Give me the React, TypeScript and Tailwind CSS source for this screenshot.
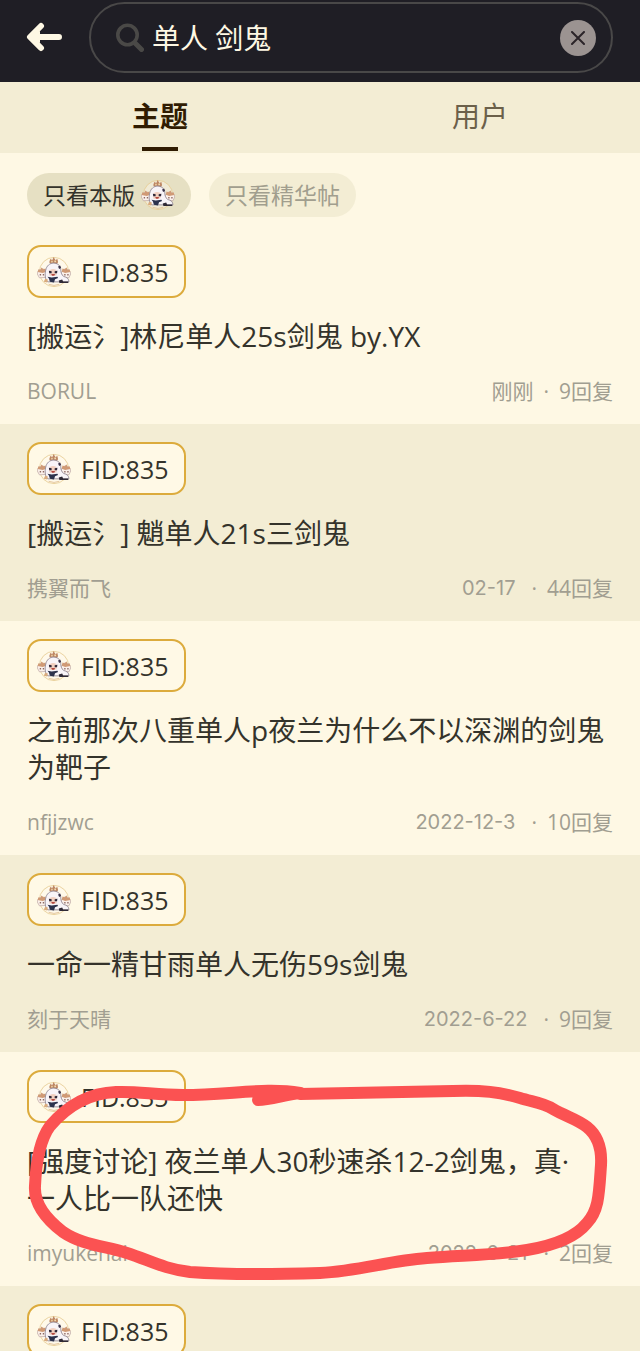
import { useState } from "react";
import clsx from "clsx";

interface Topic {
  id: number;
  title: string;
  author: string;
  date: string;
  replies: number;
  marked?: boolean;
}

const topics: Topic[] = [
  { id: 1, title: "[搬运氵]林尼单人25s剑鬼 by.YX", author: "BORUL", date: "刚刚", replies: 9 },
  { id: 2, title: "[搬运氵] 魈单人21s三剑鬼", author: "携翼而飞", date: "02-17", replies: 44 },
  {
    id: 3,
    title: "之前那次八重单人p夜兰为什么不以深渊的剑鬼为靶子",
    author: "nfjjzwc",
    date: "2022-12-3",
    replies: 10,
  },
  { id: 4, title: "一命一精甘雨单人无伤59s剑鬼", author: "刻于天晴", date: "2022-6-22", replies: 9 },
  {
    id: 5,
    title: "[强度讨论] 夜兰单人30秒速杀12-2剑鬼，真·\n一人比一队还快",
    author: "imyukenai",
    date: "2022-6-21",
    replies: 2,
    marked: true,
  },
  { id: 6, title: "", author: "", date: "", replies: 0 },
];

function BoardEmblem() {
  return (
    <svg viewBox="0 0 100 92" className="h-8 w-[34px] shrink-0" aria-hidden="true">
      <circle cx="50" cy="46" r="43" fill="#fffaf0" fillOpacity="0.4" stroke="#e6cc94" strokeWidth="2.5" />
      {/* crown */}
      <path d="M36 17l3-9 6 3 4-9 5 9 6-3 2 9-5 7H41z" fill="#bd8663" />
      <path d="M42 13h4v5h-4zM51 12h5v5h-5z" fill="#f4dcae" />
      {/* side faces */}
      <path d="M1 52c0-10 8-16 20-14l8 10-4 14-18 1z" fill="#fbf0ea" stroke="#b9a3a0" strokeWidth="2" />
      <path d="M2 46l2-8 6 2 3-7 6 5 6-2 2 9-10 4z" fill="#d09a75" />
      <path d="M99 52c0-10-8-16-20-14l-8 10 4 14 19 1z" fill="#fbf0ea" stroke="#b9a3a0" strokeWidth="2" />
      <path d="M98 46l-2-8-6 2-3-7-6 5-6-2-2 9 10 4z" fill="#d09a75" />
      <path d="M8 52h4v4H8zM17 52h4v4h-4zM80 52h4v4h-4zM89 52h4v4h-4z" fill="#8d6a65" />
      {/* body */}
      <path d="M27 70c-5-12-3-26 0-34 4-12 15-17 24-16 12 1 19 9 19 20 0 9 3 14 8 19 10 2 16 7 16 16H32z" fill="#f8f4f8" stroke="#8f8592" strokeWidth="2.500" />
      <path d="M35 45c3-6 7-8 12-8 6 0 10 2 12 8l-2 11-20 1z" fill="#f1cfc0" />
      <path d="M35 42l8 2v6h-7zM60 42l-8 2v6h7z" fill="#2e2738" />
      <path d="M42 52h11l-2 5h-7z" fill="#b3473e" />
      <path d="M31 60l12 2 17-2 2 4-9 3-3 10-12-2-3-10z" fill="#2c324c" />
      <path d="M62 30l6-3 3 7-6 3z" fill="#3b344b" />
      <path d="M64 71l10-3 3 6h15v4H66z" fill="#302a36" />
      <path d="M24 66l8 2-2 9-10-2z" fill="#d9ab7d" />
      <path d="M34 82q16 7 32 0" fill="none" stroke="#e0bf95" strokeWidth="2.500" />
    </svg>
  );
}

function MarkerLoop() {
  return (
    <svg
      viewBox="0 0 640 234"
      className="pointer-events-none absolute inset-x-0 top-0 z-10 w-full"
      fill="none"
      stroke="#fb5252"
      strokeWidth="12"
      strokeLinecap="round"
      strokeLinejoin="round"
      aria-hidden="true"
    >
      <path d="M258 48C271 48 283 43 300 41C266 35 230 43 183 43C155 43 138 39 116 40C91 41 68 53 50 74C39 89 36 111 35 134C34 149 42 164 63 180C82 193 105 194 127 201C149 208 164 217 190 220C230 223 286 222 320 221C359 219 388 209 427 206C467 203 495 203 527 198C551 194 575 186 587 171C599 158 599 142 601 113C602 96 597 83 587 75C577 67 567 65 553 57C544 51 533 50 520 46C500 40 482 38 453 39C414 40 362 41 300 42" />
    </svg>
  );
}

function TopicRow({ topic }: { topic: Topic }) {
  return (
    <li className="relative shrink-0 px-[27px] pt-[18px] pb-[17px] even:bg-[#f3edd4]">
      <a
        href="#board"
        className="inline-flex h-[53px] items-center gap-[10px] rounded-[14px] border-2 border-[#dcab3c] bg-[#fff9e6] pr-4 pl-2 align-top text-[25px] leading-8 text-[#34332b]"
      >
        <BoardEmblem />
        FID:835
      </a>
      {topic.title && (
        <>
          <h2 className="mt-5 text-[28px] leading-[37px] whitespace-pre-line text-[#34332b]">
            <a href="#topic">{topic.title}</a>
          </h2>
          <div className="mt-5 flex items-center justify-between text-[21px] leading-8 text-[#a19e91]">
            <span>{topic.author}</span>
            <div className="flex gap-[10px]">
              <time
                className={clsx(topic.date.includes("-") && "pr-1.5 font-['Inter',sans-serif] text-[20px]")}
              >
                {topic.date}
              </time>
              <span>·</span>
              <span>{topic.replies}回复</span>
            </div>
          </div>
        </>
      )}
      {topic.marked && <MarkerLoop />}
    </li>
  );
}

export default function App() {
  const [query, setQuery] = useState("单人 剑鬼");
  const [tab, setTab] = useState("主题");

  return (
    <div className="flex h-screen flex-col overflow-hidden bg-[#fef8e4] font-['Open_Sans','Noto_Sans_CJK_SC',sans-serif]">
      <header className="flex shrink-0 items-start bg-[#1f1e25] pt-[2px] pr-[27px] pb-[9px] pl-[26px]">
        <button type="button" aria-label="返回" className="mr-[26px] flex h-[70px] items-center">
          <svg viewBox="0 0 37 30" className="h-[30px] w-[37px]" fill="none" stroke="#fef8e4" strokeWidth="6" strokeLinecap="round" strokeLinejoin="round">
            <path d="M15 4L4 15l11 11M5 15h28" />
            <path d="M7 15l6-5v10z" fill="#fef8e4" strokeWidth="2" />
          </svg>
        </button>
        <label className="flex h-[71px] min-w-0 flex-1 items-center rounded-full border-2 border-[#494848] pr-[15px] pl-[25px]">
          <svg viewBox="0 0 28 29" className="mr-2 h-[29px] w-7 shrink-0" fill="none" stroke="#4a4947" strokeLinecap="round">
            <circle cx="11.5" cy="12" r="9.7" strokeWidth="3.6" />
            <path d="M19 20l6.500 6.500" strokeWidth="5" />
          </svg>
          <input
            type="text"
            aria-label="搜索"
            value={query}
            onChange={(e) => setQuery(e.target.value)}
            className="h-10 min-w-0 flex-1 bg-transparent text-[28px] leading-10 text-[#fef8e4] outline-none"
          />
          <button
            type="button"
            aria-label="清除"
            onClick={() => setQuery("")}
            className="flex size-9 shrink-0 items-center justify-center rounded-full bg-[#9b9391]"
          >
            <svg viewBox="0 0 14 14" className="size-[14px]" stroke="#2b2429" strokeWidth="2" strokeLinecap="round">
              <path d="M1 1l12 12M13 1L1 13" />
            </svg>
          </button>
        </label>
      </header>

      <nav className="grid shrink-0 grid-cols-2 bg-[#f3edd4]">
        {["主题", "用户"].map((name) => (
          <button
            key={name}
            type="button"
            onClick={() => setTab(name)}
            className={clsx(
              "flex h-[71px] flex-col items-center justify-between pt-[14px] pb-[2px] text-[28px] leading-10",
              tab === name ? "font-bold text-[#301c02]" : "text-[#6b604a]"
            )}
          >
            {name}
            <span className={clsx("h-1 w-9", tab === name && "bg-[#301c02]")} />
          </button>
        ))}
      </nav>

      <div className="flex shrink-0 gap-[18px] px-[27px] pt-5 pb-[10px] text-[23px] leading-8">
        <button type="button" className="flex h-11 items-center gap-1.5 rounded-full bg-[#e6e0c3] px-4 text-[#34332b]">
          只看本版
          <BoardEmblem />
        </button>
        <button type="button" className="h-11 rounded-full bg-[#f3edd4] px-4 text-[#a19e8e]">
          只看精华帖
        </button>
      </div>

      <ul className="flex min-h-0 flex-1 flex-col overflow-hidden">
        {topics.map((topic) => (
          <TopicRow key={topic.id} topic={topic} />
        ))}
      </ul>
    </div>
  );
}
